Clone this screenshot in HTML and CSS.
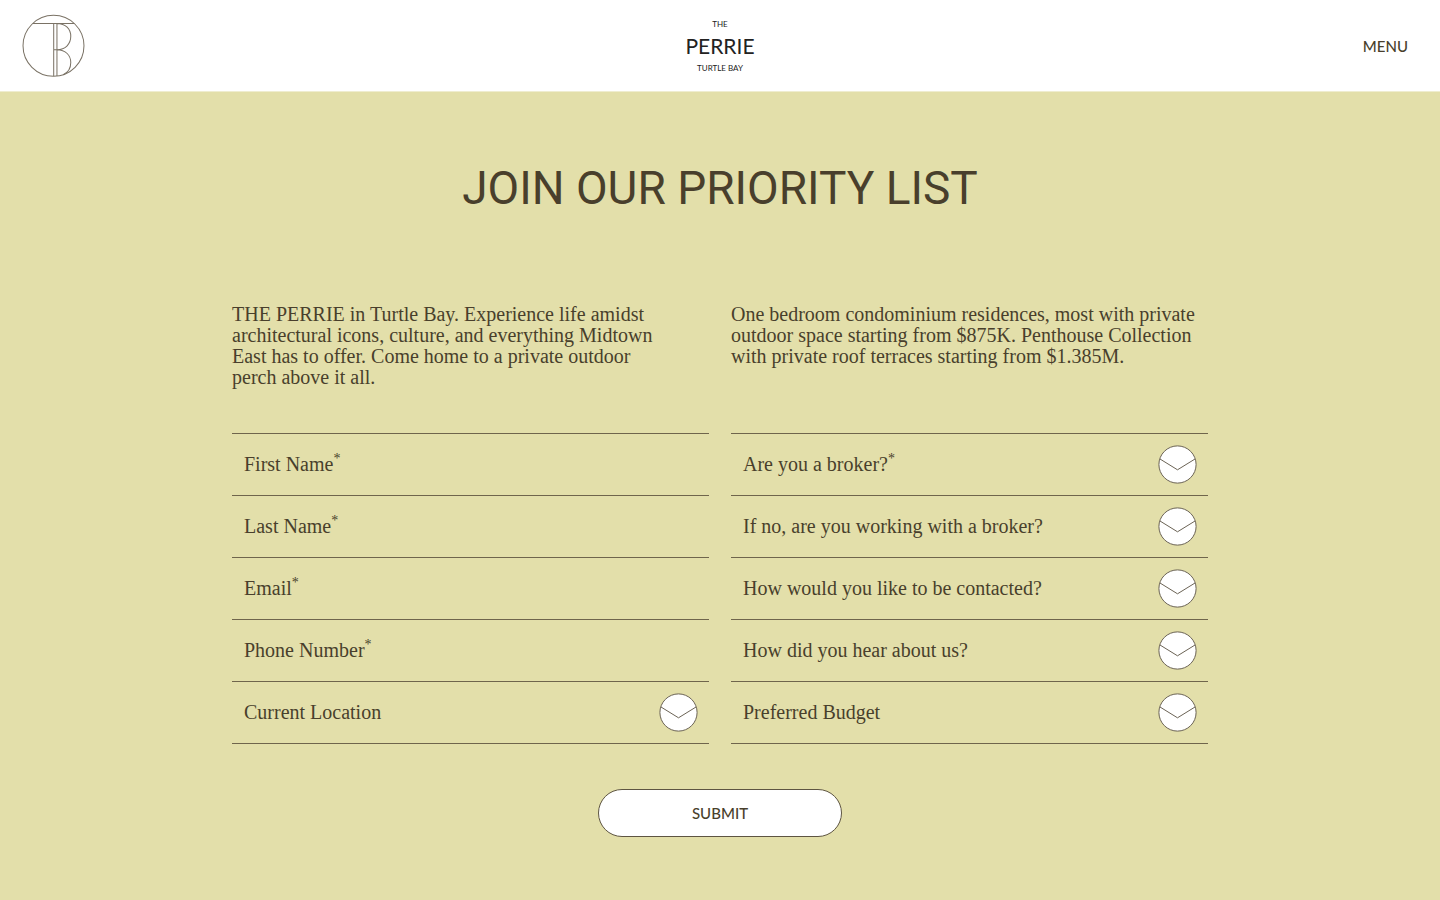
FILE: index.html
```html
<!DOCTYPE html>
<html lang="en">
<head>
<meta charset="utf-8">
<meta name="viewport" content="width=device-width, initial-scale=1">
<title>The Perrie Turtle Bay</title>
<link rel="stylesheet" href="styles.css">
</head>
<body>
<svg class="sprite" aria-hidden="true">
  <symbol id="chevron" viewBox="0 0 40 40">
    <circle cx="19.5" cy="19.5" r="18.6" fill="#fff"/>
    <path d="M2 14 19.5 24.8 37 14"/>
  </symbol>
</svg>
<header class="header">
  <a class="monogram" href="#" aria-label="Turtle Bay home">
    <svg class="monogram-art" viewBox="0 0 62 62" aria-hidden="true">
      <circle cx="31" cy="31.3" r="30"/>
      <path d="M10.5 9.3H51.5M31.2 9.3V61M34.4 9.3V61M34.4 9.3C43 9.3 48 14.8 48 22C48 29.2 43 35.2 34.4 35.2H31.2M34.4 35.2C43 35.2 48 40.8 48 47.8C48 53.8 45.5 57.6 40.5 59.7"/>
    </svg>
  </a>
  <a class="brand" href="#">
    <span class="brand-small">THE</span>
    <span class="brand-name">PERRIE</span>
    <span class="brand-small">TURTLE BAY</span>
  </a>
  <button class="menu" type="button">MENU</button>
</header>
<main class="main">
  <h1 class="title">JOIN OUR PRIORITY LIST</h1>
  <div class="columns intro">
    <p class="copy">THE PERRIE in Turtle Bay. Experience life amidst<br>architectural icons, culture, and everything Midtown<br>East has to offer. Come home to a private outdoor<br>perch above it all.</p>
    <p class="copy">One bedroom condominium residences, most with private<br>outdoor space starting from $875K. Penthouse Collection<br>with private roof terraces starting from $1.385M.</p>
  </div>
  <form class="form">
    <div class="columns">
      <div class="fields">
        <div class="field"><label for="first">First Name<sup>*</sup></label><input class="control" id="first" type="text" required></div>
        <div class="field"><label for="last">Last Name<sup>*</sup></label><input class="control" id="last" type="text" required></div>
        <div class="field"><label for="email">Email<sup>*</sup></label><input class="control" id="email" type="email" required></div>
        <div class="field"><label for="phone">Phone Number<sup>*</sup></label><input class="control" id="phone" type="tel" required></div>
        <div class="field"><label for="location">Current Location</label><select class="control" id="location"><option></option></select><svg class="chevron" aria-hidden="true"><use href="#chevron"/></svg></div>
      </div>
      <div class="fields">
        <div class="field"><label for="broker">Are you a broker?<sup>*</sup></label><select class="control" id="broker" required><option></option></select><svg class="chevron" aria-hidden="true"><use href="#chevron"/></svg></div>
        <div class="field"><label for="working">If no, are you working with a broker?</label><select class="control" id="working"><option></option></select><svg class="chevron" aria-hidden="true"><use href="#chevron"/></svg></div>
        <div class="field"><label for="contact">How would you like to be contacted?</label><select class="control" id="contact"><option></option></select><svg class="chevron" aria-hidden="true"><use href="#chevron"/></svg></div>
        <div class="field"><label for="hear">How did you hear about us?</label><select class="control" id="hear"><option></option></select><svg class="chevron" aria-hidden="true"><use href="#chevron"/></svg></div>
        <div class="field"><label for="budget">Preferred Budget</label><select class="control" id="budget"><option></option></select><svg class="chevron" aria-hidden="true"><use href="#chevron"/></svg></div>
      </div>
    </div>
    <button class="submit" type="submit">SUBMIT</button>
  </form>
</main>
</body>
</html>
```
FILE: styles.css
```css
* {
  box-sizing: border-box;
}

body {
  margin: 0;
  min-height: 100vh;
  background: #e3dfaa;
  color: #493f2c;
  font-family: "Liberation Serif", serif;
  font-size: 20px;
  line-height: 21px;
}

.sprite {
  position: absolute;
  width: 0;
  height: 0;
}

.header {
  display: grid;
  grid-template-columns: 1fr auto 1fr;
  align-items: center;
  padding: 14px 32px 14px 22px;
  background: #fff;
  border-bottom: 1px solid #efedd0;
  font-family: Lato, sans-serif;
}

.monogram {
  justify-self: start;
  display: flex;
}

.monogram-art {
  width: 63px;
  height: 63px;
  fill: none;
  stroke: #7a7265;
  stroke-width: 1;
}

.brand {
  display: flex;
  flex-direction: column;
  align-items: center;
  margin-right: -10px;
  color: #222;
  text-decoration: none;
}

.brand-small {
  font-size: 8px;
  line-height: 10px;
}

.brand-name {
  font-size: 21px;
  line-height: 34px;
}

.menu {
  justify-self: end;
  padding: 0;
  border: 0;
  background: none;
  color: inherit;
  font: 500 15px/20px Lato, sans-serif;
}

.main {
  padding: 64px 24px;
}

.title {
  margin: 0;
  font: 400 46px/64px Roboto, sans-serif;
  text-align: center;
}

.columns {
  display: grid;
  grid-template-columns: 1fr 1fr;
  gap: 22px;
  max-width: 976px;
  margin: 0 auto;
}

.intro {
  margin-top: 84px;
}

.copy {
  margin: 0;
  white-space: nowrap;
}

.form {
  margin-top: 45px;
}

.fields {
  border-top: 1px solid #6f654c;
}

.field {
  position: relative;
  display: flex;
  align-items: center;
  height: 62px;
  padding: 0 12px;
  border-bottom: 1px solid #6f654c;
}

.field sup {
  font-size: 14px;
  line-height: 0;
}

.control {
  flex: 1;
  min-width: 0;
  height: 40px;
  padding: 0 48px 0 8px;
  border: 0;
  background: none;
  color: inherit;
  font: inherit;
  appearance: none;
}

.chevron {
  position: absolute;
  right: 10px;
  width: 40px;
  height: 40px;
  fill: none;
  stroke: #6b6355;
  stroke-width: 1;
  pointer-events: none;
}

.submit {
  display: block;
  width: 244px;
  height: 48px;
  margin: 45px auto 0;
  border: 1px solid #5e5542;
  border-radius: 24px;
  background: #fff;
  color: inherit;
  font: 500 15px/20px Lato, sans-serif;
}
```
